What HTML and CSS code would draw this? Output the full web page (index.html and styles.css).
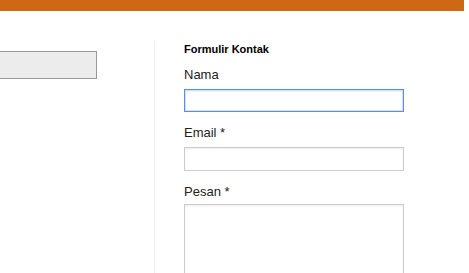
FILE: index.html
```html
<!DOCTYPE html>
<html lang="id">
<head>
    <meta charset="UTF-8">
    <meta name="viewport" content="width=device-width, initial-scale=1.0">
    <title>Formulir Kontak</title>
    <link rel="stylesheet" href="styles.css">
</head>
<body>
    <div class="topbar"></div>

    <div class="content">
        <div class="sidebar">
            <div class="search-box"></div>
        </div>

        <div class="main">
            <h2 class="widget-title">Formulir Kontak</h2>
            <form class="contact-form">
                <label for="nama">Nama</label>
                <input type="text" id="nama" class="field field-focus">

                <label for="email">Email *</label>
                <input type="text" id="email" class="field">

                <label for="pesan">Pesan *</label>
                <textarea id="pesan" class="field field-area"></textarea>
            </form>
        </div>
    </div>
</body>
</html>
```

FILE: styles.css
```css
body {
    font-family: "Liberation Sans", Arial, sans-serif;
    background-color: white;
    color: #222;
    margin: 0;
    overflow: hidden;
}
.topbar {
    width: 464px;
    height: 11px;
    background-color: #CD6816;
}
.content {
    display: flex;
    padding-top: 30px;
}
.sidebar {
    width: 154px;
    padding-top: 10px;
}
.search-box {
    width: 96px;
    height: 26px;
    background-color: #ececec;
    border: 1px solid #999;
    border-left: none;
}
.main {
    border-left: 1px solid #eee;
    padding-left: 29px;
    padding-top: 1px;
    height: 240px;
}
.widget-title {
    font-size: 11px;
    font-weight: bold;
    color: #000;
    margin: 0 0 11px 0;
    line-height: 14px;
}
.contact-form label {
    display: block;
    font-size: 13px;
    line-height: 16px;
}
.field {
    display: block;
    box-sizing: border-box;
    width: 220px;
    height: 24px;
    margin: 6px 0 13px 0;
    border: 1px solid #ccc;
    background: white;
    padding: 0 4px;
    box-shadow: inset 0 1px 2px rgba(0,0,0,0.08);
}
.field-focus {
    height: 23px;
    border: 1px solid #4d90fe;
    box-shadow: inset 0 0 0 1px #ddd, inset 0 1px 2px rgba(0,0,0,0.2);
}
.field-area {
    height: 100px;
    margin-top: 4px;
    resize: none;
}
```
